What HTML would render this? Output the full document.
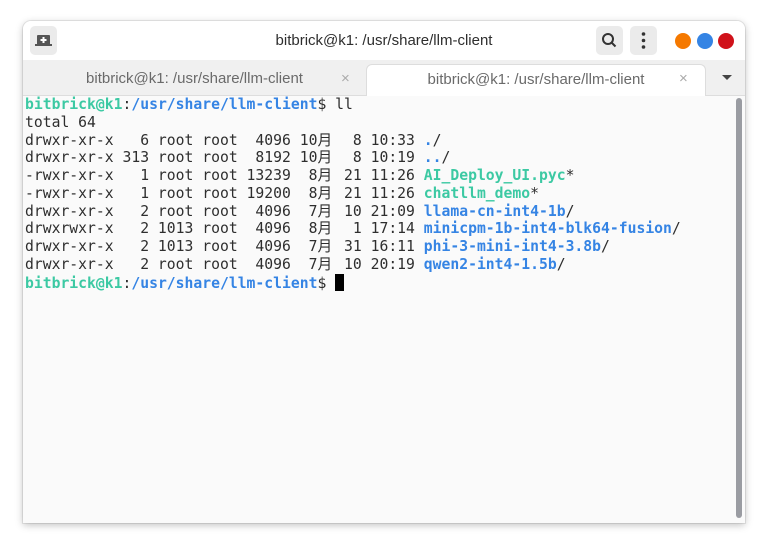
<!DOCTYPE html>
<html><head><meta charset="utf-8"><style>
body{margin:0;width:768px;height:548px;background:#fff;position:relative;overflow:hidden;font-family:"Liberation Sans","DejaVu Sans",sans-serif}
.win{position:absolute;left:23px;top:21px;width:722px;height:502px;background:#fafafa;border-radius:8px 8px 0 0;box-shadow:0 2px 8px rgba(0,0,0,.25),0 0 0 1px rgba(0,0,0,.08);overflow:hidden}
.hdr{position:absolute;left:0;top:0;width:722px;height:39px;background:#fff}
.title{position:absolute;left:0;width:722px;top:11px;text-align:center;font-size:15px;color:#2e2e2e}
.btn{position:absolute;top:5px;width:27px;height:29px;background:#ebebeb;border-radius:5px}
.dot{position:absolute;top:12px;width:16px;height:16px;border-radius:50%}
.tabs{position:absolute;left:0;top:39px;width:722px;height:35px;background:#f0f0f0;border-bottom:1px solid #ddd}
.tab{position:absolute;top:0;height:35px;font-size:15px;color:#6a6a6a;text-align:center;line-height:38px}
.x{position:absolute;top:0;font-size:15px;color:#aaa}
.term{position:absolute;left:2px;top:75px;font-family:"DejaVu Sans Mono","Noto Sans CJK SC",monospace;font-size:14.72px;line-height:17.75px;color:#2e2e2e;white-space:pre}
.g{color:#3cc9a3;font-weight:bold}.b{color:#3584e4;font-weight:bold}
.m{display:inline-block;width:2ch;text-align:left}
.cur{display:inline-block;width:9px;height:17px;background:#000;vertical-align:-3px}
</style></head><body>
<div class="win">
<div class="hdr">
<div class="btn" style="left:7px"><svg width="27" height="29"><rect x="7" y="9" width="13" height="10" rx="1" fill="#555"/><rect x="5" y="18" width="17" height="2" fill="#555"/><path d="M13.5 11v6M10.5 14h6" stroke="#fff" stroke-width="2"/></svg></div>
<div class="title">bitbrick@k1: /usr/share/llm-client</div>
<div class="btn" style="left:573px"><svg width="27" height="29"><circle cx="12" cy="13" r="5" stroke="#333" stroke-width="2" fill="none"/><path d="M15.5 16.5l4 4" stroke="#333" stroke-width="2"/></svg></div>
<div class="btn" style="left:607px"><svg width="27" height="29"><circle cx="13.5" cy="8" r="1.8" fill="#333"/><circle cx="13.5" cy="14.5" r="1.8" fill="#333"/><circle cx="13.5" cy="21" r="1.8" fill="#333"/></svg></div>
<div class="dot" style="left:652px;background:#f57900"></div>
<div class="dot" style="left:674px;background:#3584e4"></div>
<div class="dot" style="left:695px;background:#d0121a"></div>
</div>
<div class="tabs">
<div class="tab" style="left:0;width:343px">bitbrick@k1: /usr/share/llm-client</div>
<div class="x" style="left:318px;top:10px">×</div>
<div class="tab" style="left:343px;width:338px;top:4px;height:31px;line-height:30px;background:#fff;border:1px solid #ddd;border-bottom:none;border-radius:6px 6px 0 0">bitbrick@k1: /usr/share/llm-client</div>
<div class="x" style="left:656px;top:10px">×</div>
<svg style="position:absolute;left:698px;top:14px" width="12" height="8"><path d="M1 1h10l-5 5z" fill="#444"/></svg>
</div>
<div style="position:absolute;left:713px;top:77px;width:6px;height:420px;background:#9a9ca2;border-radius:3px"></div>
<div class="term"><span class="g">bitbrick@k1</span>:<span class="b">/usr/share/llm-client</span>$ ll
total 64
drwxr-xr-x   6 root root  4096 10<span class="m">月</span>  8 10:33 <span class="b">.</span>/
drwxr-xr-x 313 root root  8192 10<span class="m">月</span>  8 10:19 <span class="b">..</span>/
-rwxr-xr-x   1 root root 13239  8<span class="m">月</span> 21 11:26 <span class="g">AI_Deploy_UI.pyc</span>*
-rwxr-xr-x   1 root root 19200  8<span class="m">月</span> 21 11:26 <span class="g">chatllm_demo</span>*
drwxr-xr-x   2 root root  4096  7<span class="m">月</span> 10 21:09 <span class="b">llama-cn-int4-1b</span>/
drwxrwxr-x   2 1013 root  4096  8<span class="m">月</span>  1 17:14 <span class="b">minicpm-1b-int4-blk64-fusion</span>/
drwxr-xr-x   2 1013 root  4096  7<span class="m">月</span> 31 16:11 <span class="b">phi-3-mini-int4-3.8b</span>/
drwxr-xr-x   2 root root  4096  7<span class="m">月</span> 10 20:19 <span class="b">qwen2-int4-1.5b</span>/
<span class="g">bitbrick@k1</span>:<span class="b">/usr/share/llm-client</span>$ <span class="cur"></span></div>
</div>
</body></html>
